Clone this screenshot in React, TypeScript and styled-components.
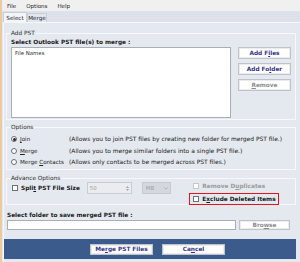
import React from 'react';
import styled, { createGlobalStyle } from 'styled-components';

const PANEL = '#e4e8ef';
const NAVY = '#35358a';

const Global = createGlobalStyle`
  html, body { margin: 0; padding: 0; background: ${PANEL}; }
  body { font-family: "DejaVu Sans", Verdana, sans-serif; }
  * { box-sizing: border-box; }
`;

const Window = styled.div`
  width: 300px;
  height: 262px;
  border-left: 2px solid #ecc9a0;
  display: flex;
  flex-direction: column;
  background: ${PANEL};
  overflow: hidden;
  color: #1e1e1e;
`;

const MenuBar = styled.div`
  height: 11px;
  flex: none;
  background: #f0f0f0;
  display: flex;
  align-items: center;
  padding-left: 5px;
  gap: 10px;
  font-size: 5.5px;
  color: #222;
`;

const MenuItem = styled.span``;

const TabStrip = styled.div`
  height: 11px;
  flex: none;
  background: #dde1ea;
  display: flex;
  align-items: flex-end;
  padding-left: 1px;
`;

const Tab = styled.div<{ $active?: boolean }>`
  height: ${(p) => (p.$active ? 10 : 9)}px;
  width: ${(p) => (p.$active ? 24 : 20)}px;
  background: ${(p) => (p.$active ? '#f4f5f8' : '#e3e6ed')};
  border: 1px solid #c9cdd6;
  border-bottom: none;
  font-size: 5.6px;
  display: flex;
  align-items: center;
  justify-content: center;
  color: #222;
`;

const TabPage = styled.div`
  flex: 1;
  margin-left: 1px;
  border-top: 1px solid #f6f7fa;
  border-left: 1px solid #f6f7fa;
  background: ${PANEL};
  padding: 10px 4px 0 2px;
  display: flex;
  flex-direction: column;
`;

const GroupBox = styled.div<{ $h: number; $mt?: number }>`
  height: ${(p) => p.$h}px;
  margin-top: ${(p) => p.$mt ?? 0}px;
  border: 1px solid #f7f8fb;
  padding: 0 4px;
  display: flex;
  flex-direction: column;
`;

const GroupTitle = styled.div`
  margin-top: -4px;
  margin-left: -1px;
  padding: 0 1px;
  width: fit-content;
  background: ${PANEL};
  font-size: 5.8px;
  line-height: 7px;
  color: #333;
`;

const BoldLabel = styled.div<{ $mt?: number; $ml?: number }>`
  margin-top: ${(p) => p.$mt ?? 0}px;
  margin-left: ${(p) => p.$ml ?? 0}px;
  font-size: 5.8px;
  line-height: 7px;
  font-weight: bold;
  color: #1a1a1a;
`;

const FileRow = styled.div`
  margin-top: 1.5px;
  display: flex;
  align-items: flex-start;
`;

const ListBox = styled.div`
  width: 221px;
  height: 71px;
  background: #fff;
  border: 1px solid #a9adb4;
  padding: 2px 3px;
  font-size: 5.4px;
  line-height: 7px;
  color: #333;
`;

const ButtonColumn = styled.div`
  margin-left: 7px;
  display: flex;
  flex-direction: column;
  gap: 4px;
`;

const Button = styled.button<{ $w: number; $h?: number; $ml?: number; $disabled?: boolean }>`
  width: ${(p) => p.$w}px;
  height: ${(p) => p.$h ?? 12}px;
  padding: 0;
  margin: 0 0 0 ${(p) => p.$ml ?? 0}px;
  background: #fff;
  border: 1px solid #bfc3c9;
  box-shadow: inset 0 0 0 1px #ececec;
  font-family: "DejaVu Sans", Verdana, sans-serif;
  font-size: 5.8px;
  font-weight: bold;
  color: ${(p) => (p.$disabled ? '#8c8c8c' : NAVY)};
  display: flex;
  align-items: center;
  justify-content: center;
`;

const RadioGrid = styled.div`
  margin-top: 4px;
  display: grid;
  grid-template-columns: 6px 46px 1fr;
  column-gap: 3px;
  row-gap: 3.5px;
  align-items: center;
`;

const Radio = styled.span<{ $checked?: boolean }>`
  width: 6px;
  height: 6px;
  border-radius: 50%;
  border: 1px solid #6b6f76;
  background: #fff;
  display: flex;
  align-items: center;
  justify-content: center;
  &::after {
    content: '';
    width: 3px;
    height: 3px;
    border-radius: 50%;
    background: ${(p) => (p.$checked ? '#2a2a2a' : 'transparent')};
  }
`;

const RadioLabel = styled.span`
  font-size: 5.6px;
  line-height: 8px;
  color: #222;
  white-space: nowrap;
`;

const Description = styled.span`
  font-size: 5.95px;
  line-height: 8px;
  color: #222;
  white-space: nowrap;
`;

const AdvanceRow = styled.div`
  margin-top: -2px;
  display: flex;
  align-items: flex-start;
`;

const SplitRow = styled.div`
  margin-top: 2px;
  height: 12px;
  display: flex;
  align-items: center;
`;

const CheckBox = styled.span<{ $disabled?: boolean; $ml?: number }>`
  width: 6px;
  height: 6px;
  flex: none;
  margin-left: ${(p) => p.$ml ?? 0}px;
  border: 1px solid ${(p) => (p.$disabled ? '#c4c7cc' : '#6b6f76')};
  background: #fff;
`;

const CheckLabel = styled.span<{ $disabled?: boolean }>`
  margin-left: 3px;
  font-size: 5.8px;
  font-weight: bold;
  color: ${(p) => (p.$disabled ? '#9b9b9b' : '#1a1a1a')};
  white-space: nowrap;
`;

const SpinBox = styled.div`
  margin-left: 7px;
  width: 45px;
  height: 12px;
  background: #eaecf0;
  border: 1px solid #c9ccd2;
  display: flex;
  align-items: center;
  justify-content: space-between;
  padding: 0 2px 0 2px;
  font-size: 5.4px;
  color: #9c9c9c;
`;

const SpinArrows = styled.span`
  display: flex;
  flex-direction: column;
  gap: 1px;
`;

const Dropdown = styled.div`
  margin-left: 10px;
  width: 29px;
  height: 12px;
  background: #d4d7dd;
  border: 1px solid #c6c9cf;
  display: flex;
  align-items: center;
  justify-content: space-between;
  padding: 0 2px 0 3px;
  font-size: 5.4px;
  color: #a3a3a3;
`;

const CheckColumn = styled.div`
  margin-left: 18px;
  display: flex;
  flex-direction: column;
  gap: 1px;
`;

const CheckRow = styled.div<{ $highlight?: boolean }>`
  height: 12px;
  width: fit-content;
  border: 1.5px solid ${(p) => (p.$highlight ? '#e3141c' : 'transparent')};
  padding: 0 2.5px 0 3.5px;
  display: flex;
  align-items: center;
`;

const SaveRow = styled.div`
  margin-top: 1px;
  margin-left: 1px;
  display: flex;
`;

const PathInput = styled.div`
  width: 229px;
  height: 10px;
  background: #fff;
  border: 1px solid #a9adb4;
`;

const ActionBar = styled.div`
  margin-top: 9.5px;
  margin-left: -2px;
  height: 20px;
  background: #3c5b8d;
  display: flex;
  align-items: center;
  padding-left: 86px;
  gap: 9px;
`;

const Arrow = ({ up }: { up?: boolean }) => (
  <svg width="3" height="2" viewBox="0 0 4 2" style={{ display: 'block' }}>
    <path d={up ? 'M0 2 L2 0 L4 2 Z' : 'M0 0 L2 2 L4 0 Z'} fill="#8e8e8e" />
  </svg>
);

const Chevron = () => (
  <svg width="4" height="3" viewBox="0 0 6 4" style={{ display: 'block' }}>
    <path d="M0.5 0.5 L3 3 L5.5 0.5" fill="none" stroke="#a0a0a0" strokeWidth="1" />
  </svg>
);

export default function App() {
  return (
    <>
      <Global />
      <Window>
        <MenuBar>
          <MenuItem>File</MenuItem>
          <MenuItem>Options</MenuItem>
          <MenuItem>Help</MenuItem>
        </MenuBar>
        <TabStrip>
          <Tab $active>Select</Tab>
          <Tab>Merge</Tab>
        </TabStrip>
        <TabPage>
          <GroupBox $h={87}>
            <GroupTitle>Add PST</GroupTitle>
            <BoldLabel $mt={1.5}>Select Outlook PST file(s) to merge :</BoldLabel>
            <FileRow>
              <ListBox>File Names</ListBox>
              <ButtonColumn>
                <Button $w={53}>
                  Add F<u>i</u>les
                </Button>
                <Button $w={53}>
                  Add Fo<u>l</u>der
                </Button>
                <Button $w={53} $disabled>
                  <u>R</u>emove
                </Button>
              </ButtonColumn>
            </FileRow>
          </GroupBox>

          <GroupBox $h={43} $mt={7}>
            <GroupTitle>Options</GroupTitle>
            <RadioGrid>
              <Radio $checked />
              <RadioLabel>
                <u>J</u>oin
              </RadioLabel>
              <Description>(Allows you to join PST files by creating new folder for merged PST file.)</Description>
              <Radio />
              <RadioLabel>
                <u>M</u>erge
              </RadioLabel>
              <Description>(Allows you to merge similar folders into a single PST file.)</Description>
              <Radio />
              <RadioLabel>
                Merge <u>C</u>ontacts
              </RadioLabel>
              <Description>(Allows only contacts to be merged across PST files.)</Description>
            </RadioGrid>
          </GroupBox>

          <GroupBox $h={27} $mt={8}>
            <GroupTitle>Advance Options</GroupTitle>
            <AdvanceRow>
              <SplitRow>
                <CheckBox $ml={1} />
                <CheckLabel>
                  Spli<u>t</u> PST File Size
                </CheckLabel>
                <SpinBox>
                  <span>50</span>
                  <SpinArrows>
                    <Arrow up />
                    <Arrow />
                  </SpinArrows>
                </SpinBox>
                <Dropdown>
                  <span>MB</span>
                  <Chevron />
                </Dropdown>
              </SplitRow>
              <CheckColumn>
                <CheckRow>
                  <CheckBox $disabled />
                  <CheckLabel $disabled>
                    Remove D<u>u</u>plicates
                  </CheckLabel>
                </CheckRow>
                <CheckRow $highlight>
                  <CheckBox />
                  <CheckLabel>
                    E<u>x</u>clude Deleted Items
                  </CheckLabel>
                </CheckRow>
              </CheckColumn>
            </AdvanceRow>
          </GroupBox>

          <BoldLabel $mt={6.5} $ml={1}>
            Select folder to save merged PST file :
          </BoldLabel>
          <SaveRow>
            <PathInput />
            <Button $w={51} $h={10} $ml={3} $disabled>
              Bro<u>w</u>se
            </Button>
          </SaveRow>

          <ActionBar>
            <Button $w={63} $h={11}>
              Me<u>r</u>ge PST Files
            </Button>
            <Button $w={63} $h={11}>
              Ca<u>n</u>cel
            </Button>
          </ActionBar>
        </TabPage>
      </Window>
    </>
  );
}
